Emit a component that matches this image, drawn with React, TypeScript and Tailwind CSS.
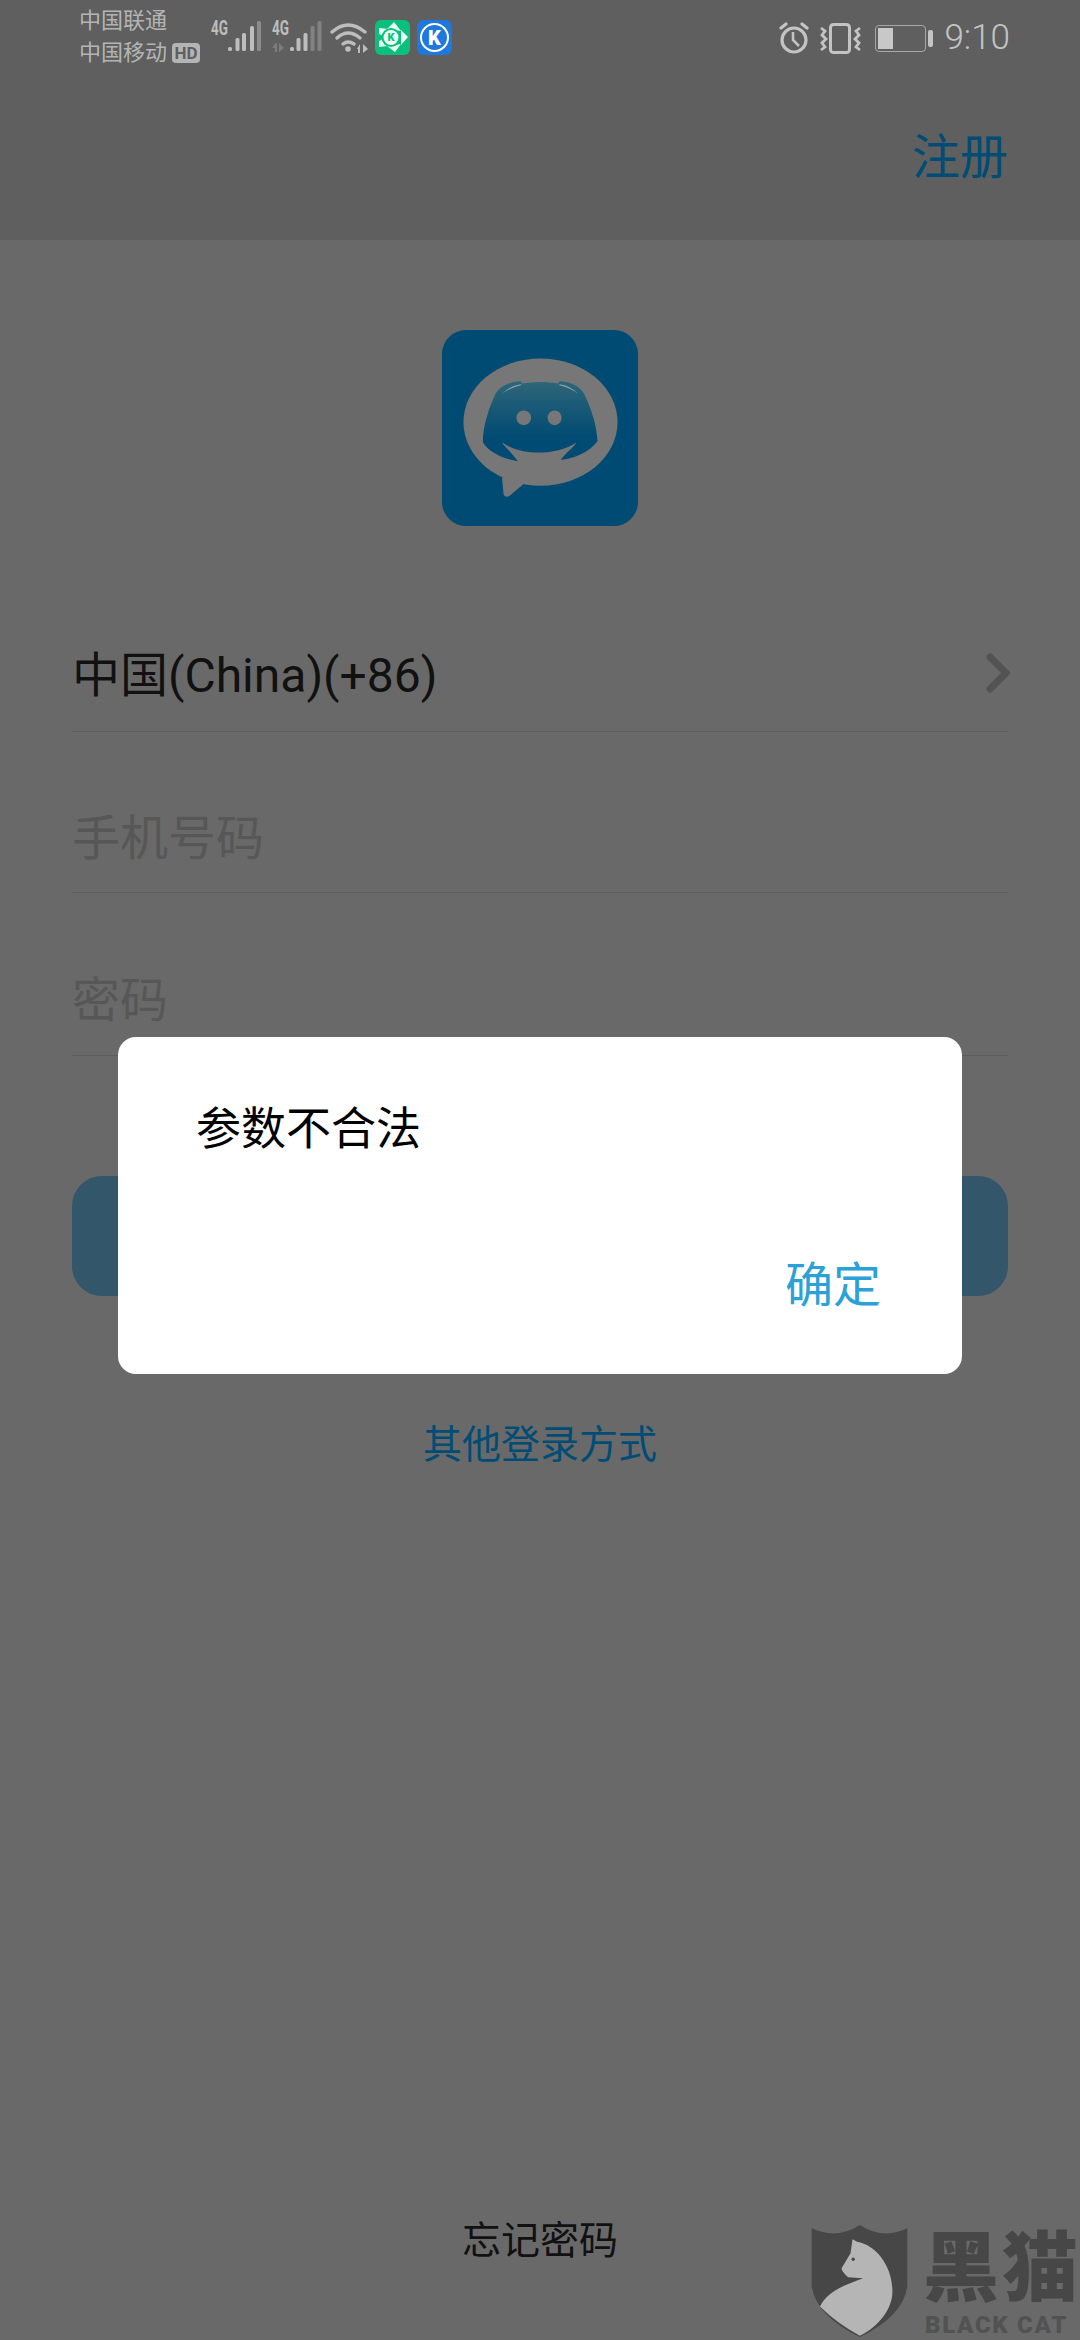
const cjk = "font-['Roboto','Noto_Sans_CJK_SC',sans-serif]";

function Signal({ second }: { second?: boolean }) {
  const bars = second
    ? [
        { x: 18, y: 27, fill: "#bdbdbd" },
        { x: 24.5, y: 18, fill: "#bdbdbd" },
        { x: 31.5, y: 13, fill: "#bdbdbd" },
        { x: 38.5, y: 6, fill: "#828282" },
        { x: 45.5, y: 1, fill: "#828282" },
      ]
    : [
        { x: 17, y: 27, fill: "#bdbdbd" },
        { x: 24.5, y: 18, fill: "#bdbdbd" },
        { x: 31, y: 13, fill: "#bdbdbd" },
        { x: 39, y: 6, fill: "#bdbdbd" },
        { x: 46, y: 1, fill: "#8c8c8c" },
      ];
  return (
    <svg width="52" height="33" viewBox="0 0 52 33" className="overflow-visible">
      <text x="0" y="15" fontSize="21" fontWeight="700" fill="#bdbdbd" textLength="17" lengthAdjust="spacingAndGlyphs" fontFamily="Roboto">
        4G
      </text>
      {second && (
        <g fill="#7c7c7c">
          <rect x="3" y="23" width="2" height="9" />
          <path d="M0 28 L3 24 V28 Z" />
          <path d="M7 23 L12 28 L7 32 Z" />
        </g>
      )}
      {bars.map((b, i) => (
        <rect key={i} x={b.x} y={b.y} width="4" height={31 - b.y} rx="1.5" fill={b.fill} />
      ))}
    </svg>
  );
}

function Wifi() {
  return (
    <svg width="38" height="32" viewBox="0 0 38 32" fill="none" stroke="#bdbdbd" strokeWidth="3.4" strokeLinecap="round">
      <path d="M2 11 Q18 -3 35 11" />
      <path d="M7 17 Q18 7 30 17" />
      <path d="M13 23 Q18 19 24 23" />
      <circle cx="18" cy="28" r="2.8" fill="#bdbdbd" stroke="none" />
      <path d="M27 28 L30 23 V32 H28 V28 Z" fill="#bdbdbd" stroke="none" />
      <path d="M33 23 L38 28 L33 32 Z" fill="#bdbdbd" stroke="none" />
    </svg>
  );
}

function GreenApp() {
  return (
    <div className="relative flex h-[35px] w-[35px] items-center justify-center rounded-[6px] bg-[#0ac07c]">
      <svg width="35" height="35" viewBox="0 0 35 35" className="absolute inset-0">
        <path d="M19 2 L26 11 L12 9 Z M26 10 L33 17 L26 25 Z M26 24 L20 32 L12 26 Z M4 8 L13 9 L9 16 L4 14 Z M4 27 L12 26 L8 19 L4 21 Z" fill="#eafff6" />
        <circle cx="16" cy="17.5" r="9.5" fill="#0ac07c" />
        <circle cx="16" cy="17.5" r="7.5" fill="#eafff6" />
      </svg>
      <span className="relative -left-[1.5px] font-['Roboto',sans-serif] text-[11px] leading-none font-black text-[#0ac07c]">K</span>
    </div>
  );
}

function BlueApp() {
  return (
    <div className="flex h-[35px] w-[35px] items-center justify-center rounded-[7px] bg-[#1f78dc]">
      <div className="flex h-[29px] w-[29px] items-center justify-center rounded-full border-2 border-white">
        <span className="font-['Roboto',sans-serif] text-[20px] leading-none font-black text-white">K</span>
      </div>
    </div>
  );
}

function Alarm() {
  return (
    <svg width="30" height="32" viewBox="0 0 30 32" fill="none" stroke="#c4c4c4" strokeWidth="3.2">
      <circle cx="15" cy="18" r="12" />
      <path d="M14 10 V18 L20 24" strokeWidth="2.6" />
      <path d="M2 6 L7 2 M28 6 L23 2" strokeLinecap="round" />
    </svg>
  );
}

function Vibrate() {
  return (
    <svg width="41" height="31" viewBox="0 0 41 31" fill="none" stroke="#c4c4c4">
      <rect x="10.5" y="1.5" width="19" height="28" rx="3" strokeWidth="3" />
      <path d="M1 5 L5 8 L2 12 L6 16 L2 20 L5 24 L1 27" strokeWidth="2.8" />
      <path d="M40 5 L36 8 L39 12 L35 16 L39 20 L36 24 L40 27" strokeWidth="2.8" />
    </svg>
  );
}

function Battery() {
  return (
    <div className="flex items-center gap-[2px]">
      <div className="flex h-[27px] w-[51px] items-center rounded-[4px] border-[1.5px] border-[#a8a8a8] p-[2px]">
        <div className="h-full w-[15px] bg-[#c8c8c8]" />
      </div>
      <div className="h-[17px] w-[5px] rounded-[2px] bg-[#c4c4c4]" />
    </div>
  );
}

function Logo() {
  return (
    <svg width="196" height="196" viewBox="66 60 585 585">
      <defs>
        <linearGradient id="face" x1="0" y1="0" x2="0" y2="1">
          <stop offset="0" stopColor="#2f6679" />
          <stop offset="0.7" stopColor="#004b73" />
        </linearGradient>
      </defs>
      <rect x="66" y="60" width="585" height="585" rx="72" fill="#004b73" />
      <ellipse cx="360" cy="335" rx="230" ry="190" fill="#777777" />
      <path d="M245 500 L250 552 Q255 562 268 555 L315 515 Z" fill="#777777" />
      <path
        d="M300 212 C262 216 238 230 226 250 C205 295 188 345 188 395 C205 425 250 445 293 452 L270 424 C258 412 250 404 245 395 C300 436 410 436 468 395 C460 408 448 418 440 425 L420 447 C460 445 505 425 530 392 C528 345 512 295 490 250 C478 230 455 216 418 212 L412 220 C375 214 340 214 305 220 Z"
        fill="url(#face)"
      />
      <path d="M245 250 Q270 226 300 222 L304 224 Q270 232 245 250 Z" fill="#8aa0a8" />
      <path d="M472 250 Q448 226 418 222 L414 224 Q448 232 472 250 Z" fill="#8aa0a8" />
      <ellipse cx="310" cy="322" rx="22" ry="22" fill="#777777" />
      <ellipse cx="402" cy="322" rx="21" ry="22" fill="#777777" />
    </svg>
  );
}

function Watermark() {
  return (
    <div className="absolute top-[2225px] left-[811px] flex w-[269px] gap-[15px]">
      <svg width="97" height="113" viewBox="93 105 292 340" className="shrink-0">
        <path d="M95 115 Q170 150 240 105 Q310 150 383 115 L383 290 Q370 380 240 442 Q110 380 95 290 Z" fill="#474747" />
        <path d="M218 148 L232 155 C290 165 340 230 338 310 C335 370 280 420 240 438 Q170 400 120 350 C140 310 180 290 250 265 L205 262 Q185 245 185 235 L212 190 Z" fill="#b5b5b5" />
        <circle cx="220" cy="208" r="5" fill="#474747" />
      </svg>
      <div className="flex flex-col pt-[9px]">
        <span className="font-['Liberation_Sans','Noto_Sans_CJK_SC',sans-serif] text-[76px] leading-[70px] font-black tracking-[3px] whitespace-nowrap text-[#474747]">
          黑猫
        </span>
        <span className="mt-[9px] ml-[2px] font-['Roboto',sans-serif] text-[24px] leading-[24px] font-black tracking-[1.7px] whitespace-nowrap text-[#525252]">
          BLACK CAT
        </span>
      </div>
    </div>
  );
}

export default function App() {
  return (
    <div className={`relative h-[2340px] w-[1080px] overflow-hidden bg-[#696969] ${cjk}`}>
      {/* header with status bar */}
      <div className="h-[240px] bg-[#5f5f5f]">
        <div className="flex h-[70px] items-start pt-[5px] pr-[70px] pl-[79px]">
          <div className="flex w-[125px] flex-col text-[22px] leading-[32px] text-[#b4b4b4]">
            <span>中国联通</span>
            <span className="flex items-center gap-[5px] whitespace-nowrap">
              中国移动
              <span className="flex h-[20px] w-[28px] items-center justify-center rounded-[4px] bg-[#b4b4b4] text-[17px] leading-none font-bold text-[#5f5f5f]">HD</span>
            </span>
          </div>
          <div className="ml-[7px] pt-[15px]">
            <Signal />
          </div>
          <div className="ml-[9px] pt-[15px]">
            <Signal second />
          </div>
          <div className="ml-[6px] pt-[16px]">
            <Wifi />
          </div>
          <div className="ml-[7px] flex gap-[7px] pt-[15px]">
            <GreenApp />
            <BlueApp />
          </div>
          <div className="ml-auto flex items-center pt-[15px]">
            <Alarm />
            <div className="ml-[11px]">
              <Vibrate />
            </div>
            <div className="ml-[14px]">
              <Battery />
            </div>
            <span className="ml-[11px] text-[35px] leading-[36px] font-light text-[#c4c4c4]">9:10</span>
          </div>
        </div>
        <div className="flex justify-end pt-[55px] pr-[72px] text-[48px] leading-[66px] text-[#004c75]">注册</div>
      </div>

      {/* login form */}
      <div className="flex flex-col px-[72px] pt-[90px]">
        <div className="flex justify-center">
          <Logo />
        </div>
        <div className="mt-[96px] flex h-[110px] items-center justify-between border-b border-[#5c5c5c] pb-[2px]">
          <span className="text-[48px] text-[#111111]">中国(China)(+86)</span>
          <svg width="24" height="42" viewBox="0 0 24 42" fill="none" stroke="#535353" strokeWidth="7" strokeLinecap="round" className="mt-[-6px] mr-[-2px]">
            <path d="M4 5 L20 21 L4 37" />
          </svg>
        </div>
        <div className="flex h-[161px] items-center border-b border-[#5c5c5c] pt-[53px]">
          <span className="text-[48px] text-[#575757]">手机号码</span>
        </div>
        <div className="flex h-[163px] items-center border-b border-[#5c5c5c] pt-[53px]">
          <span className="text-[48px] text-[#575757]">密码</span>
        </div>
        <div className="mt-[120px] h-[120px] rounded-[30px] bg-[#33566b]" />
        <div className="mt-[124px] text-center text-[39px] leading-[50px] text-[#004c75]">其他登录方式</div>
      </div>
      <div className="absolute inset-x-0 top-[2216px] text-center text-[39px] leading-[50px] text-[#111111]">忘记密码</div>

      {/* dialog */}
      <div className="absolute top-[1037px] left-[118px] flex h-[337px] w-[844px] flex-col rounded-[18px] bg-white pt-[62px] pr-[81px] pb-[57px] pl-[78px]">
        <span className="text-[45px] leading-[62px] text-black">参数不合法</span>
        <span className="mt-auto self-end text-[48px] leading-[62px] text-[#2ba1d8]">确定</span>
      </div>

      <Watermark />
    </div>
  );
}
